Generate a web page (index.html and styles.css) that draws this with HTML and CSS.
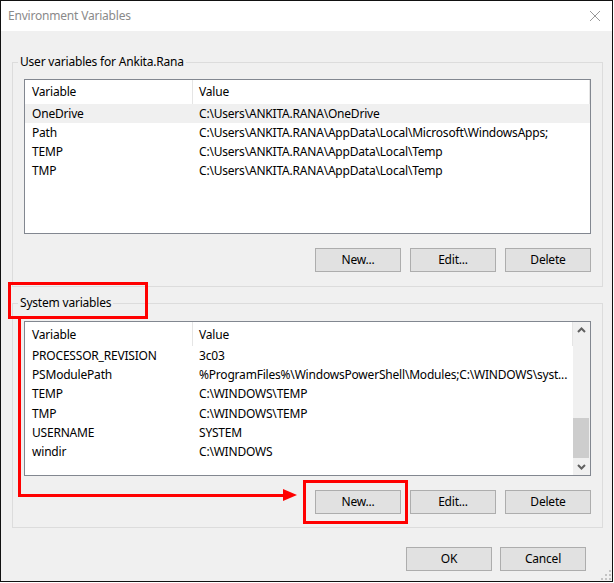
FILE: index.html
```html
<!DOCTYPE html>
<html lang="en">
<head>
    <meta charset="UTF-8">
    <title>Environment Variables</title>
    <link rel="stylesheet" href="styles.css">
</head>
<body>
    <div class="window">
        <div class="titlebar">
            <span class="title">Environment Variables</span>
            <svg class="close" width="12" height="12" viewBox="0 0 12 12">
                <path d="M1 1 L11 11 M11 1 L1 11" stroke="#999" stroke-width="1" fill="none"/>
            </svg>
        </div>

        <div class="content">
            <fieldset class="group">
                <legend>User variables for Ankita.Rana</legend>
                <div class="listbox">
                    <div class="list-area">
                        <div class="row head">
                            <div class="col-var">Variable</div>
                            <div class="col-val">Value</div>
                        </div>
                        <div class="row selected">
                            <div class="col-var">OneDrive</div>
                            <div class="col-val">C:\Users\ANKITA.RANA\OneDrive</div>
                        </div>
                        <div class="row">
                            <div class="col-var">Path</div>
                            <div class="col-val">C:\Users\ANKITA.RANA\AppData\Local\Microsoft\WindowsApps;</div>
                        </div>
                        <div class="row">
                            <div class="col-var">TEMP</div>
                            <div class="col-val">C:\Users\ANKITA.RANA\AppData\Local\Temp</div>
                        </div>
                        <div class="row">
                            <div class="col-var">TMP</div>
                            <div class="col-val">C:\Users\ANKITA.RANA\AppData\Local\Temp</div>
                        </div>
                    </div>
                </div>
                <div class="buttons">
                    <button class="btn">New...</button>
                    <button class="btn">Edit...</button>
                    <button class="btn">Delete</button>
                </div>
            </fieldset>

            <fieldset class="group system">
                <legend>System variables</legend>
                <div class="listbox">
                    <div class="list-area">
                        <div class="row head">
                            <div class="col-var">Variable</div>
                            <div class="col-val">Value</div>
                        </div>
                        <div class="row">
                            <div class="col-var">PROCESSOR_REVISION</div>
                            <div class="col-val">3c03</div>
                        </div>
                        <div class="row">
                            <div class="col-var">PSModulePath</div>
                            <div class="col-val">%ProgramFiles%\WindowsPowerShell\Modules;C:\WINDOWS\syst...</div>
                        </div>
                        <div class="row">
                            <div class="col-var">TEMP</div>
                            <div class="col-val">C:\WINDOWS\TEMP</div>
                        </div>
                        <div class="row">
                            <div class="col-var">TMP</div>
                            <div class="col-val">C:\WINDOWS\TEMP</div>
                        </div>
                        <div class="row">
                            <div class="col-var">USERNAME</div>
                            <div class="col-val">SYSTEM</div>
                        </div>
                        <div class="row">
                            <div class="col-var">windir</div>
                            <div class="col-val">C:\WINDOWS</div>
                        </div>
                    </div>
                    <div class="scrollbar">
                        <svg class="arrow" width="17" height="17" viewBox="0 0 17 17">
                            <path d="M5 10 L8.5 6.5 L12 10" stroke="#606060" stroke-width="2" fill="none"/>
                        </svg>
                        <div class="track">
                            <div class="thumb"></div>
                        </div>
                        <svg class="arrow" width="17" height="17" viewBox="0 0 17 17">
                            <path d="M5 7 L8.5 10.5 L12 7" stroke="#606060" stroke-width="2" fill="none"/>
                        </svg>
                    </div>
                </div>
                <div class="buttons">
                    <button class="btn">New...</button>
                    <button class="btn">Edit...</button>
                    <button class="btn">Delete</button>
                </div>
            </fieldset>

            <div class="footer">
                <button class="btn">OK</button>
                <button class="btn">Cancel</button>
            </div>
        </div>

        <div class="grip">
            <svg width="10" height="10" viewBox="0 0 10 10">
                <rect x="8" y="0" width="2" height="2" fill="#c4c4c4"/>
                <rect x="4" y="4" width="2" height="2" fill="#c4c4c4"/>
                <rect x="8" y="4" width="2" height="2" fill="#c4c4c4"/>
                <rect x="0" y="8" width="2" height="2" fill="#c4c4c4"/>
                <rect x="4" y="8" width="2" height="2" fill="#c4c4c4"/>
                <rect x="8" y="8" width="2" height="2" fill="#c4c4c4"/>
            </svg>
        </div>

        <!-- red annotations drawn on top of the dialog -->
        <div class="mark mark-label"></div>
        <div class="mark-line line-down"></div>
        <div class="mark-line line-across"></div>
        <div class="arrow-head"></div>
        <div class="mark mark-button"></div>
    </div>
</body>
</html>
```

FILE: styles.css
```css
* {
    box-sizing: border-box;
}

body {
    margin: 0;
    background: #fff;
    font-family: "Noto Sans", "Open Sans", sans-serif;
    font-size: 12px;
    letter-spacing: -0.2px;
    color: #000;
}

.window {
    position: relative;
    width: 613px;
    height: 582px;
    border: 1px solid #111;
    background: #f0f0f0;
    display: flex;
    flex-direction: column;
}

.titlebar {
    height: 30px;
    background: #fff;
    display: flex;
    align-items: center;
    justify-content: space-between;
    padding: 0 11px 0 7px;
}

.title {
    color: #8a8a8a;
    line-height: 16px;
}

.close {
    display: block;
}

.content {
    padding: 23px 9px 0 11px;
    display: flex;
    flex-direction: column;
}

.group {
    margin: 0 0 8px 0;
    padding: 9px 11px 14px 11px;
    border: 1px solid #dcdcdc;
    min-width: 0;
}

.group.system {
    padding-top: 10px;
    padding-bottom: 13px;
}

.group legend {
    padding: 0 2px;
    margin-left: -6px;
    line-height: 16px;
    height: 16px;
}

.listbox {
    height: 155px;
    border: 1px solid #828790;
    background: #fff;
    display: flex;
    overflow: hidden;
}

.list-area {
    flex: 1;
    min-width: 0;
}

.row {
    display: flex;
    height: 19px;
    line-height: 19px;
    white-space: nowrap;
}

.row.head {
    height: 24px;
    line-height: 24px;
}

.system .row {
    height: 19.2px;
    line-height: 20px;
}

.system .row.head {
    height: 24px;
    line-height: 26px;
}

.row.selected {
    background: #f0f0f0;
}

.col-var {
    width: 168px;
    padding-left: 7px;
    overflow: hidden;
}

.col-val {
    flex: 1;
    padding-left: 6px;
    overflow: hidden;
}

.head .col-var {
    border-right: 1px solid #e5e5e5;
}

.head .col-val {
    border-right: 1px solid #e5e5e5;
}

.scrollbar {
    width: 17px;
    background: #f0f0f0;
    display: flex;
    flex-direction: column;
}

.arrow {
    display: block;
    flex: none;
}

.track {
    flex: 1;
    display: flex;
    flex-direction: column;
    justify-content: flex-end;
    padding: 0 1px 0 0;
}

.thumb {
    height: 40px;
    background: #cdcdcd;
}

.buttons {
    display: flex;
    justify-content: flex-end;
    gap: 9px;
    margin-top: 14px;
}

.btn {
    width: 86px;
    height: 24px;
    background: #e1e1e1;
    border: 1px solid #adadad;
    font-family: inherit;
    font-size: 12px;
    letter-spacing: -0.2px;
    color: #000;
    padding: 0;
    line-height: 22px;
}

.footer {
    display: flex;
    justify-content: flex-end;
    gap: 8px;
    margin-top: 11px;
    padding-right: 17px;
}

.grip {
    position: absolute;
    right: 1px;
    bottom: 1px;
    width: 10px;
    height: 10px;
}

.grip svg {
    display: block;
}

.mark {
    position: absolute;
    border: 3px solid #f00;
}

.mark-label {
    left: 7px;
    top: 281px;
    width: 140px;
    height: 37px;
}

.mark-button {
    left: 302px;
    top: 479px;
    width: 105px;
    height: 44px;
}

.mark-line {
    position: absolute;
    background: #f00;
}

.line-down {
    left: 17px;
    top: 318px;
    width: 3px;
    height: 178px;
}

.line-across {
    left: 17px;
    top: 493px;
    width: 270px;
    height: 3px;
}

.arrow-head {
    position: absolute;
    left: 282px;
    top: 488px;
    width: 0;
    height: 0;
    border-top: 6px solid transparent;
    border-bottom: 6px solid transparent;
    border-left: 14px solid #f00;
}
```
